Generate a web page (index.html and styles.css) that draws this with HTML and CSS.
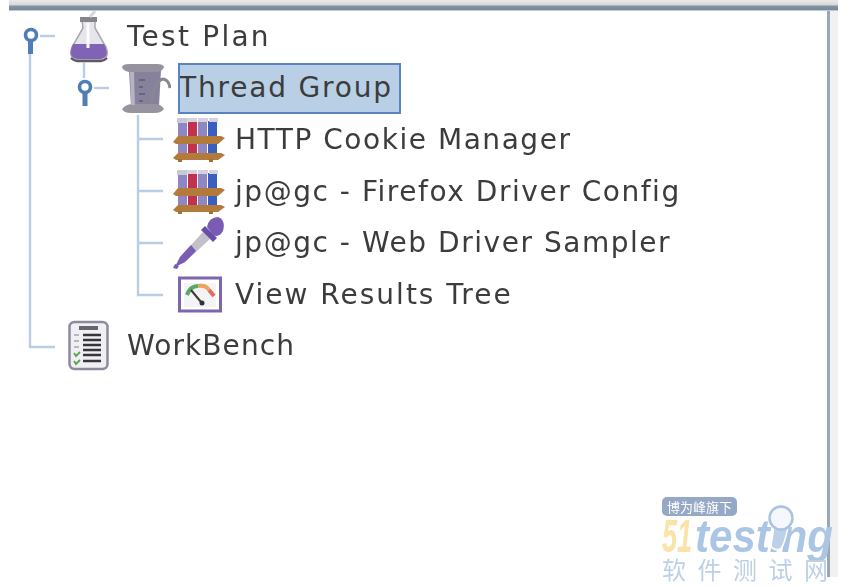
FILE: index.html
```html
<!DOCTYPE html>
<html lang="en">
<head>
<meta charset="utf-8">
<title>Test Plan</title>
<link rel="stylesheet" href="styles.css">
</head>
<body>
<svg width="0" height="0" class="defs">
  <defs>
    <g id="rack">
      <rect x="6" y="3" width="9" height="36" fill="#8f86c4"/>
      <rect x="16" y="1" width="9" height="38" fill="#c0324f"/>
      <rect x="26" y="1" width="9" height="38" fill="#8f86c4"/>
      <rect x="36" y="3" width="9" height="36" fill="#3a5fc0"/>
      <rect x="5" y="0" width="10" height="5" fill="#c9c9d4"/>
      <rect x="15" y="0" width="10" height="4" fill="#d6d2dc"/>
      <rect x="26" y="0" width="10" height="4" fill="#d6d2dc"/>
      <rect x="37" y="0" width="9" height="4" fill="#d6d2dc"/>
      <path d="M6 18H49L53 20L46 26H4L1 24Z" fill="#b37b3b"/>
      <path d="M6 35H49L53 37L46 42H4L1 40Z" fill="#b37b3b"/>
      <rect x="6" y="41" width="4" height="3" fill="#a56f30"/>
      <rect x="37" y="41" width="4" height="3" fill="#a56f30"/>
    </g>
  </defs>
</svg>
<main class="window">
  <div class="topbar"></div>
  <div class="pane">
    <section class="tree">
      <svg class="lines" width="180" height="370" viewBox="0 0 180 370">
        <g fill="none" stroke="#b9cde3" stroke-width="2.4">
          <path d="M30 50V347H55"/>
          <path d="M40 36H55"/>
          <path d="M84 62V78"/>
          <path d="M94 88H109"/>
          <path d="M138 115V295H163"/>
          <path d="M138 139H163M138 191H163M138 243H163"/>
        </g>
        <g fill="none" stroke="#4f7db5" stroke-width="3.6">
          <circle cx="31" cy="35" r="5.5"/>
          <path d="M30.500 41V54" stroke-width="5"/>
          <circle cx="85" cy="87" r="5.500"/>
          <path d="M85 93V106" stroke-width="5"/>
        </g>
      </svg>
      <div class="row depth-0">
        <svg class="icon" width="42" height="52" viewBox="0 0 42 52">
          <path d="M14 9H27V17L38 36Q42 47 33 49H9Q0 47 4 36L15 17Z" fill="#e6e6ea" stroke="#a8a8b0" stroke-width="1.500"/>
          <path d="M5 33H36Q43 46 33 48H9Q-1 46 5 33Z" fill="#8163b5"/>
          <path d="M3 47Q6 50 9 50H33Q36 50 39 47" fill="none" stroke="#5d5a63" stroke-width="2.400"/>
          <path d="M12 6H29V11H12Z" fill="#85858a"/>
          <path d="M22 6L27 0" stroke="#d8d8dc" stroke-width="3"/>
          <path d="M20 12V37" stroke="#fff" stroke-width="3"/>
        </svg>
        <span class="label wide">Test Plan</span>
      </div>
      <div class="row depth-1">
        <svg class="icon" width="50" height="52" viewBox="0 -2 50 52">
          <path d="M8 6H40L38 42H10Z" fill="#86829b"/>
          <path d="M1 3Q2 0 8 0H36Q42 0 43 3Q42 7 36 8H8Q2 7 1 3Z" fill="#96929f"/>
          <path d="M1 45Q5 40 12 40H34Q40 40 43 45Q40 49 34 49H10Q3 49 1 45Z" fill="#97939f"/>
          <path d="M11 8L12 41" stroke="#b6b2c0" stroke-width="4"/>
          <path d="M18 16H24M18 23H22M18 30H24M18 37H22" stroke="#5f5c70" stroke-width="1.600"/>
          <path d="M30 38Q33 17 42 15Q48 16 49 24" fill="none" stroke="#8a8794" stroke-width="3"/>
        </svg>
        <span class="label selected">Thread Group</span>
      </div>
      <div class="row depth-2">
        <svg class="icon" width="53" height="44" viewBox="0 0 53 44"><use href="#rack"/></svg>
        <span class="label">HTTP Cookie Manager</span>
      </div>
      <div class="row depth-2">
        <svg class="icon" width="53" height="44" viewBox="0 0 53 44"><use href="#rack"/></svg>
        <span class="label">jp@gc - Firefox Driver Config</span>
      </div>
      <div class="row depth-2">
        <svg class="icon" width="53" height="52" viewBox="0 0 53 52">
          <path d="M31 15L8 40L3 50L13 45L38 22Z" fill="#c2c0c8"/>
          <path d="M8 40L3 50L13 45L24 34L19 28Z" fill="#7a5cb5"/>
          <path d="M3 47L1 51L5 52L7 49Z" fill="#7a5cb5"/>
          <path d="M29 13L41 25L45 21L33 9Z" fill="#6a4fa8"/>
          <path d="M35 10Q37 0 46 0Q54 3 51 14Q47 21 41 18Z" fill="#7a5cb5"/>
        </svg>
        <span class="label">jp@gc - Web Driver Sampler</span>
      </div>
      <div class="row depth-2">
        <svg class="icon" width="53" height="38" viewBox="0 0 53 38">
          <rect x="7.500" y="2" width="41" height="33" fill="#fff" stroke="#7d66ad" stroke-width="3"/>
          <rect x="12" y="7" width="32" height="24" fill="#f4f3f6"/>
          <path d="M15 19Q18 10 26 10" fill="none" stroke="#58a866" stroke-width="4"/>
          <path d="M26 10Q34 9 37 14" fill="none" stroke="#eaa45c" stroke-width="4"/>
          <path d="M37 14L42 20" fill="none" stroke="#e06a5c" stroke-width="4"/>
          <path d="M19 14L29 26" stroke="#3a3a3a" stroke-width="2"/>
          <circle cx="30" cy="27" r="2.500" fill="#333"/>
        </svg>
        <span class="label wide-sm">View Results Tree</span>
      </div>
      <div class="row depth-0">
        <svg class="icon" width="42" height="52" viewBox="0 0 42 52">
          <rect x="1.500" y="2" width="38" height="47" rx="5" fill="#f0eff3" stroke="#8d8a9c" stroke-width="2.500"/>
          <path d="M11 6H30V10H11Z" fill="#66666c"/>
          <path d="M15 15H33M15 20H33M15 25H33M15 30H33M15 35H33M15 41H33" stroke="#36363c" stroke-width="2.400"/>
          <path d="M6 15H11M6 21H11M6 27H11" stroke="#b8b8c0" stroke-width="2"/>
          <path d="M6 33L8 36L12 32M6 41L8 44L12 40" fill="none" stroke="#55a84a" stroke-width="1.800"/>
        </svg>
        <span class="label tight">WorkBench</span>
      </div>
    </section>
  </div>
</main>
<aside class="mark">
  <span class="badge">博为峰旗下</span>
  <div class="brand"><span class="five">51</span><span class="testing">testing</span></div>
  <svg class="lens" width="30" height="50" viewBox="0 0 30 50">
    <path d="M8 24L5 43Q8 48 14 46Q18 44 22 24Z" fill="#bcd0e8" stroke="#fff" stroke-width="1.500"/>
    <circle cx="15" cy="15" r="11.500" fill="#f4f7fb" stroke="#a9c3e0" stroke-width="2.500"/>
  </svg>
  <div class="cn">软件测试网</div>
</aside>
</body>
</html>
```
FILE: styles.css
```css
html, body {
  margin: 0;
  padding: 0;
  width: 850px;
  height: 587px;
  background: #fff;
  overflow: hidden;
}
.defs {
  position: absolute;
}
.window {
  margin-left: 9px;
  width: 829px;
  height: 577px;
  display: flex;
  flex-direction: column;
}
.topbar {
  height: 11px;
  flex: none;
  background: linear-gradient(#e9e9e9 0, #d8d8d8 45%, #8294a6 55%, #76899c 90%, #fff 100%);
}
.pane {
  flex: 1;
  background: #fff;
  border-right: 8px solid #f1f1f1;
  position: relative;
}
.pane::after {
  content: "";
  position: absolute;
  top: 0;
  bottom: 0;
  right: 0;
  width: 3px;
  background: #9aa7b6;
  filter: blur(0.5px);
}
.tree {
  position: relative;
  margin-left: -9px;
  display: flex;
  flex-direction: column;
  filter: blur(0.55px);
}
.lines {
  position: absolute;
  left: 0;
  top: -11px;
}
.row {
  height: 51.600px;
  display: flex;
  align-items: center;
}
.depth-0 {
  padding-left: 68px;
  gap: 17px;
}
.depth-1 {
  padding-left: 121px;
  gap: 8px;
}
.depth-2 {
  padding-left: 172px;
  gap: 10px;
}
.icon {
  flex: none;
}
.label {
  font-family: "DejaVu Sans", sans-serif;
  font-size: 28px;
  letter-spacing: 1.540px;
  color: #3c3c3c;
  white-space: nowrap;
  line-height: 50px;
}
.wide {
  letter-spacing: 2.250px;
}
.wide-sm {
  letter-spacing: 2px;
}
.tight {
  letter-spacing: 1.100px;
}
.selected {
  background: #b8cfe5;
  outline: 2px solid #5b83bd;
  outline-offset: -2px;
  padding: 0 8px 0 1px;
  margin-left: -1px;
  letter-spacing: 1.820px;
  height: 51px;
  line-height: 49px;
  box-sizing: border-box;
}
.mark {
  position: absolute;
  left: 660px;
  top: 497px;
  width: 175px;
  height: 88px;
  filter: blur(0.4px);
}
.badge {
  position: absolute;
  left: 2px;
  top: 0;
  width: 75px;
  height: 19px;
  border-radius: 5px;
  background: #95a9c6;
  color: #fff;
  font: 13px/19px "Noto Sans CJK SC", sans-serif;
  text-align: center;
}
.brand {
  position: absolute;
  left: 2px;
  top: 22px;
  display: flex;
  font: italic 700 46px/34px "Liberation Sans", sans-serif;
  white-space: nowrap;
}
.five {
  color: #fbe2a8;
  width: 33px;
  transform: scaleX(0.59);
  transform-origin: left center;
}
.testing {
  color: #abc6e4;
  transform: scaleX(0.915);
  transform-origin: left center;
}
.lens {
  position: absolute;
  left: 106px;
  top: 6px;
}
.cn {
  position: absolute;
  left: 2px;
  top: 59px;
  font: 400 24px/26px "Noto Sans CJK SC", sans-serif;
  color: #bdd0e5;
  letter-spacing: 11.500px;
  white-space: nowrap;
}
```
